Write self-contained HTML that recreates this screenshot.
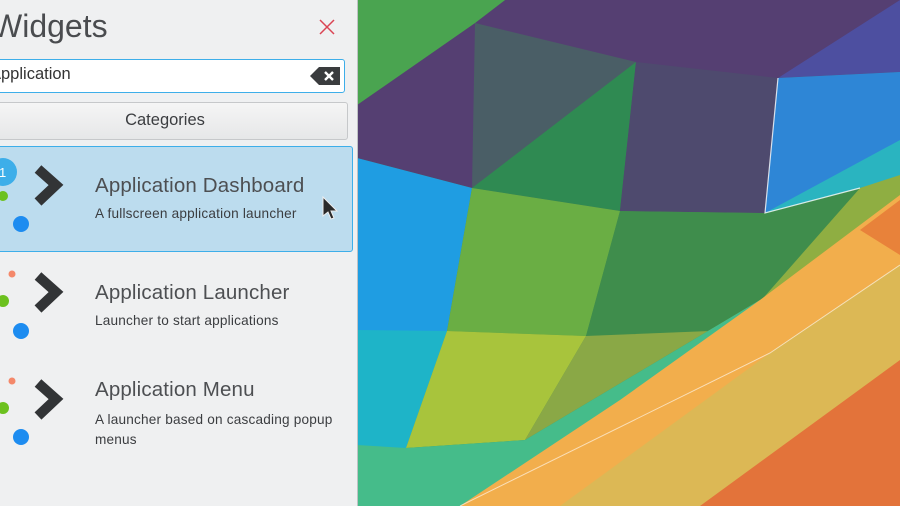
<!DOCTYPE html>
<html><head><style>
body{margin:0;width:900px;height:506px;overflow:hidden;position:relative;font-family:"Liberation Sans","DejaVu Sans",sans-serif;}
#wall{position:absolute;left:0;top:0}
#panel{position:absolute;left:0;top:0;width:357px;height:506px;background:#eff0f1;border-right:1px solid #bfc2c4;}
.t{position:absolute;color:#4d4f52;white-space:nowrap}
.h{font-size:20.5px;letter-spacing:0.15px}
.s{font-size:13.6px;color:#3b3d40;letter-spacing:0.2px}
</style></head><body>
<svg id="wall" width="900" height="506" viewBox="0 0 900 506">
<rect x="357" y="0" width="543" height="506" fill="#4a8e4c"/>
<polygon points="357,105 475,23 505,0 900,0 900,72 778,78 765,213 620,211 472,188 357,158" fill="#553f72"/>
<polygon points="357,0 505,0 475,23 357,105" fill="#4aa450"/>
<polygon points="475,23 636,62 620,211 472,188" fill="#4a5e66"/>
<polygon points="472,188 636,62 620,211" fill="#2f8a52"/>
<polygon points="636,62 778,78 765,213 620,211" fill="#4e4a6e"/>
<polygon points="778,78 900,0 900,72" fill="#4d4fa0"/>
<polygon points="778,78 900,72 900,175 860,188 765,213" fill="#2e86d6"/>
<polygon points="765,213 900,140 900,180 860,188" fill="#2ab4c0"/>
<polygon points="860,188 900,175 900,200 760,300" fill="#8fae42"/>
<polygon points="357,158 472,188 447,331 406,448 357,445" fill="#1f9de2"/>
<polygon points="357,330 447,331 406,448 357,448" fill="#1eb4c8"/>
<polygon points="472,188 620,211 586,336 447,331" fill="#6aae44"/>
<polygon points="620,211 765,213 860,188 735,330 586,336" fill="#3f8d4c"/>
<polygon points="447,331 586,336 525,440 406,448" fill="#a8c43c"/>
<polygon points="586,336 735,330 760,300 525,440" fill="#8aa846"/>
<polygon points="357,445 406,448 525,440 760,300 900,220 900,290 460,506 357,506" fill="#45bc8a"/>
<polygon points="460,506 620,400 760,300 900,195 900,506" fill="#f2ae4c"/>
<polygon points="560,506 770,353 900,265 900,506" fill="#dcb855"/>
<polygon points="700,506 900,360 900,506" fill="#e3733a"/>
<polygon points="860,230 900,200 900,255" fill="#e8823a"/>
<polyline points="460,506 770,353 900,265" fill="none" stroke="#fff" stroke-opacity=".6" stroke-width="1"/>
<polyline points="778,78 765,213 860,188" fill="none" stroke="#fff" stroke-opacity=".8" stroke-width="1.2"/>
</svg>
<div id="panel">
<div class="t" style="left:-8px;top:8px;font-size:32px;color:#4a4c4f">Widgets</div>
<svg style="position:absolute;left:319px;top:19px" width="16" height="16"><path d="M1 1L15 15M15 1L1 15" stroke="#da4453" stroke-width="1.5"/></svg>
<div style="position:absolute;left:-4px;top:59px;width:347px;height:32px;background:#fff;border:1px solid #3daee9;border-radius:3px"></div>
<div class="t" style="left:-10px;top:65px;font-size:16.5px;color:#333">Application</div>
<svg style="position:absolute;left:310px;top:65px" width="30" height="22"><path d="M0 11L9 2H30V20H9Z" fill="#3a3c3e"/><path d="M15 7L23 15M23 7L15 15" stroke="#fff" stroke-width="2.4"/></svg>
<div style="position:absolute;left:-4px;top:102px;width:350px;height:36px;background:linear-gradient(#f5f5f5,#e6e7e8);border:1px solid #c6c8ca;border-radius:3px"></div>
<div class="t" style="left:0;width:330px;text-align:center;top:111px;font-size:16.5px;color:#3b3d40">Categories</div>
<div style="position:absolute;left:-4px;top:146px;width:355px;height:104px;background:#bcdcee;border:1px solid #3daee9;border-radius:3px"></div>

<svg style="position:absolute;left:0;top:146px" width="80" height="105"><circle cx="3" cy="26" r="14" fill="#3daee9"/><text x="-1" y="31" font-size="13" fill="#fff" font-family="Liberation Sans">1</text><circle cx="3" cy="50" r="5" fill="#6cc11f"/><circle cx="21" cy="78" r="8" fill="#1d8cf0"/><path d="M38 23L56 39L38 56" fill="none" stroke="#323436" stroke-width="10"/></svg>
<div class="t h" style="left:95px;top:174px">Application Dashboard</div>
<div class="t s" style="left:95px;top:206px">A fullscreen application launcher</div>

<svg style="position:absolute;left:0;top:253px" width="80" height="105"><circle cx="12" cy="21" r="3.5" fill="#f4886a"/><circle cx="3" cy="48" r="6" fill="#6cc11f"/><circle cx="21" cy="78" r="8" fill="#1d8cf0"/><path d="M38 23L56 39L38 56" fill="none" stroke="#323436" stroke-width="10"/></svg>
<div class="t h" style="left:95px;top:281px">Application Launcher</div>
<div class="t s" style="left:95px;top:313px">Launcher to start applications</div>

<svg style="position:absolute;left:0;top:360px" width="80" height="105"><circle cx="12" cy="21" r="3.5" fill="#f4886a"/><circle cx="3" cy="48" r="6" fill="#6cc11f"/><circle cx="21" cy="77" r="8" fill="#1d8cf0"/><path d="M38 23L56 39L38 56" fill="none" stroke="#323436" stroke-width="10"/></svg>
<div class="t h" style="left:95px;top:378px">Application Menu</div>
<div class="t s" style="left:95px;top:410px;line-height:20px">A launcher based on cascading popup<br>menus</div>

<svg style="position:absolute;left:322px;top:196px" width="18" height="26"><path d="M1 1V20L6 16L9 23L12 22L9 15H15Z" fill="#2a2a2a" stroke="#eee" stroke-width="1"/></svg>
</div>
</body></html>
